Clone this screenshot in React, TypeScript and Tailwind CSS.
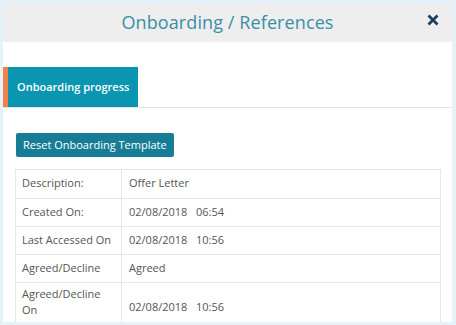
import React from "react";

const rows: { label: React.ReactNode; value: React.ReactNode; tall?: boolean }[] = [
  { label: "Description:", value: "Offer Letter" },
  { label: "Created On:", value: <>02/08/2018&nbsp;&nbsp; 06:54</> },
  { label: "Last Accessed On", value: <>02/08/2018&nbsp;&nbsp; 10:56</> },
  { label: "Agreed/Decline", value: "Agreed" },
  { label: <>Agreed/Decline<br />On</>, value: <>02/08/2018&nbsp;&nbsp; 10:56</>, tall: true },
];

export default function App() {
  return (
    <div
      className="w-[456px] h-[325px] bg-[#e5f2fa] p-[3px] overflow-hidden"
      style={{ fontFamily: '"Open Sans", "Noto Sans", sans-serif' }}
    >
      <div className="w-[449px] h-[319px] bg-white flex flex-col overflow-hidden">
        <div className="relative h-[39px] shrink-0 bg-[#eeeeee] flex items-center justify-center">
          <span className="text-[18px] text-[#3a8ea5] tracking-[0.1px]">Onboarding / References</span>
          <svg
            className="absolute right-[13px] top-[11px]"
            width="12"
            height="12"
            viewBox="0 0 12 12"
          >
            <path d="M1.5 1.5 L10.5 10.5 M10.5 1.5 L1.5 10.5" stroke="#1d3d5e" strokeWidth="2.8" strokeLinecap="butt" />
          </svg>
        </div>
        <div className="mt-[25px] border-b border-[#e3e3e3] flex shrink-0">
          <div className="h-[40px] w-[135px] bg-[#0a96b1] border-l-[5px] border-[#f37f4c] flex items-center pl-[9px]">
            <span className="text-white text-[11px] font-semibold whitespace-nowrap">Onboarding progress</span>
          </div>
        </div>
        <div className="mt-[23px] ml-[13px] shrink-0">
          <button className="h-[24px] px-[7px] bg-[#177d97] text-white text-[11px] rounded-[2px] leading-none whitespace-nowrap">
            Reset Onboarding Template
          </button>
        </div>
        <div className="mt-[12px] ml-[12px] w-[426px] border-t border-l border-r border-[#e6e6e6]">
          {rows.map((r, i) => (
            <div
              key={i}
              className={`flex ${i > 0 ? "border-t border-[#e6e6e6]" : ""} ${r.tall ? "h-[50px]" : "h-[28px]"}`}
            >
              <div className={`w-[106px] shrink-0 border-r border-[#e6e6e6] pl-[6px] text-[11px] text-[#555555] flex ${r.tall ? "items-start pt-[3px] leading-[16px]" : "items-center"}`}>
                <span>{r.label}</span>
              </div>
              <div className="flex-1 pl-[7px] text-[11px] text-[#555555] flex items-center">
                <span>{r.value}</span>
              </div>
            </div>
          ))}
        </div>
      </div>
    </div>
  );
}
